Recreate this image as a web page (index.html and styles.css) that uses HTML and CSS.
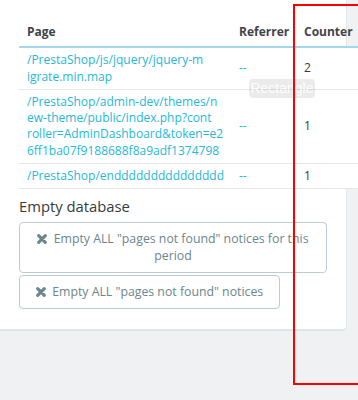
FILE: index.html
```html
<!DOCTYPE html>
<html>
<head>
<meta charset="utf-8">
<link rel="stylesheet" href="styles.css">
</head>
<body>
<div class="panel">
  <table class="grid">
    <colgroup>
      <col class="c-page"><col class="c-ref"><col class="c-count">
    </colgroup>
    <thead>
      <tr><th>Page</th><th>Referrer</th><th>Counter</th></tr>
    </thead>
    <tbody>
      <tr><td class="link url">/PrestaShop/js/jquery/jquery-m<br>igrate.min.map</td><td class="link">--</td><td>2</td></tr>
      <tr><td class="link url">/PrestaShop/admin-dev/themes/n<br>ew-theme/public/index.php?cont<br>roller=AdminDashboard&amp;token=e2<br>6ff1ba07f9188688f8a9adf1374798</td><td class="link">--</td><td>1</td></tr>
      <tr><td class="link url">/PrestaShop/enddddddddddddddd</td><td class="link">--</td><td>1</td></tr>
    </tbody>
  </table>
  <h4 class="title">Empty database</h4>
  <div class="actions">
    <button class="btn"><svg class="ico" viewBox="0 0 10 10" width="10" height="10"><path d="M1.7 1.7 L8.3 8.3 M8.3 1.7 L1.7 8.3" stroke="#6c868e" stroke-width="3.1" stroke-linecap="round"/></svg> Empty ALL "pages not found" notices for this period</button>
    <button class="btn"><svg class="ico" viewBox="0 0 10 10" width="10" height="10"><path d="M1.7 1.7 L8.3 8.3 M8.3 1.7 L1.7 8.3" stroke="#6c868e" stroke-width="3.1" stroke-linecap="round"/></svg> Empty ALL "pages not found" notices</button>
  </div>
</div>
<div class="tag">Rectangle</div>
<div class="selection"></div>
</body>
</html>
```
FILE: styles.css
```css
html, body {
  margin: 0;
  padding: 0;
}
body {
  background: #eff1f2;
  font-family: "Open Sans", "Liberation Sans", sans-serif;
  font-size: 12px;
  line-height: 16.3px;
  color: #363a41;
  min-height: 400px;
  position: relative;
  overflow: hidden;
}
.panel {
  width: 347px;
  box-sizing: border-box;
  background: #fff;
  padding: 24px 19px 20px 19px;
  border-radius: 0 0 5px 0;
  border-right: 1px solid #e3e9eb;
  border-bottom: 2px solid #dbe6e9;
}
.grid {
  width: 349px;
  table-layout: fixed;
  border-collapse: collapse;
}
.c-page { width: 212px; }
.c-ref { width: 65px; }
.c-count { width: 72px; }
.grid th {
  text-align: left;
  font-weight: 700;
  font-size: 12px;
  color: #3f444b;
  padding: 0 8px 6px;
  border-bottom: 2px solid #a3d8ec;
  background: transparent;
}
.grid td {
  background: #fff;
  padding: 4px 7px 4px 8px;
  vertical-align: middle;
  border-bottom: 1px solid #e5e8ea;
  color: #363a41;
}
.grid td.link {
  color: #25b9d7;
}
.grid td.url {
  white-space: nowrap;
}
.title {
  margin: 7px 0 6px;
  font-size: 14.8px;
  line-height: 20px;
  font-weight: 400;
  color: #363a41;
}
.actions {
  display: flex;
  flex-direction: column;
  align-items: flex-start;
  gap: 2px;
}
.btn {
  font-family: inherit;
  font-size: 12.3px;
  line-height: 16.3px;
  color: #6c868e;
  background: #fff;
  border: 1px solid #bbcdd2;
  border-radius: 4px;
  padding: 8px 16px;
  text-align: center;
  max-width: 100%;
}
.ico {
  vertical-align: -1px;
  margin-right: 3px;
}
.tag {
  position: absolute;
  left: 249px;
  top: 79px;
  width: 66px;
  height: 19px;
  border-radius: 4px;
  background: rgba(0, 0, 0, 0.08);
  color: rgba(255, 255, 255, 0.92);
  font-family: "Liberation Sans", sans-serif;
  font-size: 14px;
  line-height: 19px;
  text-align: center;
}
.selection {
  position: absolute;
  left: 293px;
  top: 4px;
  width: 80px;
  height: 377px;
  border: 2px solid #ff0000;
}
```
